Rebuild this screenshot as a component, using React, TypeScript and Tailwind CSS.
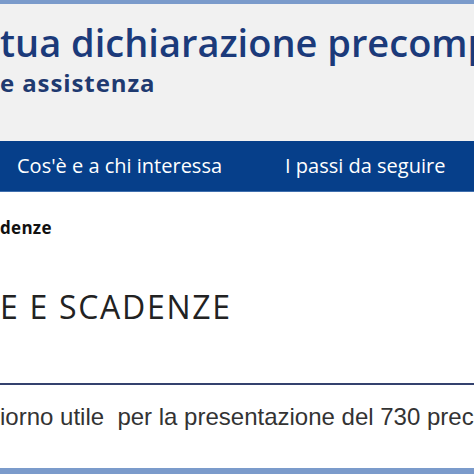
export default function App() {
  return (
    <div className="w-[474px] h-[474px] overflow-hidden bg-white flex flex-col whitespace-nowrap">
      <div className="h-[4px] bg-[#7b9bcb] shrink-0" />
      <div className="h-[137px] bg-[#f1f1f1] shrink-0 flex flex-col pt-[13px]">
        <div className="text-[38px] leading-[50px] text-[#1b3a7a] font-semibold" style={{ fontFamily: '"Open Sans", sans-serif' }}>
          tua dichiarazione precomp
        </div>
        <div className="text-[24px] leading-[32px] tracking-[0.9px] text-[#1f3a70] font-bold" style={{ fontFamily: '"Open Sans", sans-serif' }}>
          e assistenza
        </div>
      </div>
      <div className="h-[51px] bg-[#063f8a] shrink-0 flex items-center border-b border-[#3f6fae] text-white text-[20px] font-medium" style={{ fontFamily: '"Open Sans", sans-serif' }}>
        <span className="ml-[17px]">Cos'è e a chi interessa</span>
        <span className="ml-[63px]">I passi da seguire</span>
      </div>
      <div className="pt-[23px] text-[17px] tracking-[0.3px] font-bold text-[#111]" style={{ fontFamily: '"Open Sans", sans-serif' }}>
        denze
      </div>
      <div className="pt-[46px] text-[32px] leading-[40px] tracking-[1.7px] text-[#222]" style={{ fontFamily: '"Open Sans", sans-serif' }}>
        E E SCADENZE
      </div>
      <div className="mt-[56px] h-[2px] bg-[#34416e] shrink-0" />
      <div className="pt-[18px] text-[24px] leading-[28px] text-[#333]" style={{ fontFamily: '"Liberation Sans", Arial, sans-serif' }}>
        iorno utile&nbsp; per la presentazione del 730 prec
      </div>
      <div className="flex-1" />
      <div className="h-[6px] bg-[#7b9bcb] shrink-0" />
    </div>
  );
}
